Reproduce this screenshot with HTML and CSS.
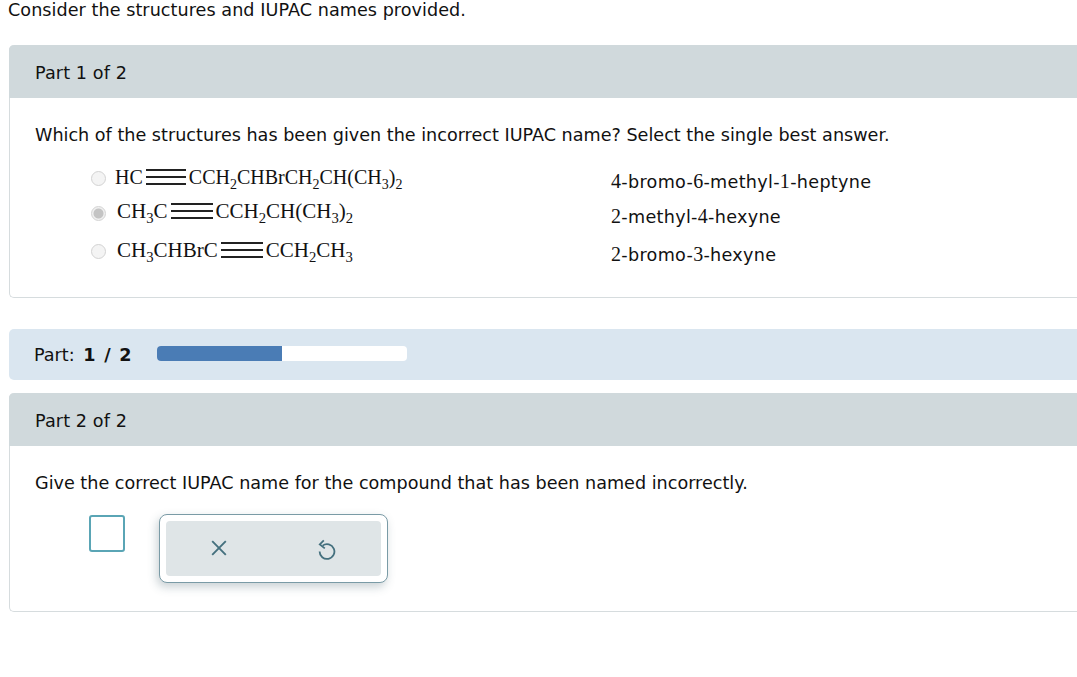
FILE: index.html
```html
<!DOCTYPE html>
<html lang="en">
<head>
<meta charset="utf-8">
<title>IUPAC names</title>
<link rel="stylesheet" href="styles.css">
</head>
<body>
<p class="intro">Consider the structures and IUPAC names provided.</p>

<section class="card first">
  <h2 class="card-head">Part 1 of 2</h2>
  <div class="card-body body-one">
    <p class="question">Which of the structures has been given the incorrect IUPAC name? Select the single best answer.</p>
    <div class="options">
      <div class="option row-a">
        <span class="radio"></span>
        <span class="formula f-a">HC<span class="bond b-a"></span>CCH<sub>2</sub>CHBrCH<sub>2</sub>CH(CH<sub>3</sub>)<sub>2</sub></span>
      </div>
      <div class="name row-a"><span class="num">4</span>-bromo-<span class="num">6</span>-methyl-<span class="num">1</span>-heptyne</div>
      <div class="option row-b">
        <span class="radio checked"></span>
        <span class="formula">CH<sub>3</sub>C<span class="bond"></span>CCH<sub>2</sub>CH(CH<sub>3</sub>)<sub>2</sub></span>
      </div>
      <div class="name row-b"><span class="num">2</span>-methyl-<span class="num">4</span>-hexyne</div>
      <div class="option row-c">
        <span class="radio"></span>
        <span class="formula">CH<sub>3</sub>CHBrC<span class="bond"></span>CCH<sub>2</sub>CH<sub>3</sub></span>
      </div>
      <div class="name row-c"><span class="num">2</span>-bromo-<span class="num">3</span>-hexyne</div>
    </div>
  </div>
</section>

<div class="progress">
  <span class="progress-label">Part: <b>1 / 2</b></span>
  <span class="track"><span class="fill"></span></span>
</div>

<section class="card">
  <h2 class="card-head">Part 2 of 2</h2>
  <div class="card-body body-two">
    <p class="question">Give the correct IUPAC name for the compound that has been named incorrectly.</p>
    <div class="answer">
      <span class="answer-box"></span>
      <div class="toolbar">
        <div class="toolbar-inner">
          <button class="tool tool-x" type="button" aria-label="Clear">
            <svg width="20" height="20" viewBox="0 0 20 20" fill="none" stroke="#44707e" stroke-width="1.9"><path d="M3.2 3.2 L16.8 16.8 M16.8 3.2 L3.2 16.8"/></svg>
          </button>
          <button class="tool tool-undo" type="button" aria-label="Reset">
            <svg width="20" height="24" viewBox="0 0 20 24" fill="none" stroke="#44707e" stroke-width="1.8"><path d="M6.6 7.6 A7.4 7.4 0 1 1 3.6 13.4"/><path d="M7.8 2.4 L3.8 6.4 L8.8 10.4"/></svg>
          </button>
        </div>
      </div>
    </div>
  </div>
</section>
</body>
</html>
```

FILE: styles.css
```css
html, body {
  margin: 0;
  padding: 0;
  background: #fff;
  overflow: hidden;
  height: 677px;
}
body {
  font-family: "DejaVu Sans", Verdana, sans-serif;
  font-size: 17.6px;
  line-height: 20px;
  color: #111;
}
.intro {
  margin: 0 0 25px 8px;
  height: 20px;
  line-height: 20px;
  letter-spacing: 0.05px;
}
.card {
  width: 1100px;
  margin-left: 9px;
  border: 1px solid #d6dcde;
  border-top: 0;
  border-right: 0;
  border-radius: 5px 0 0 5px;
  box-sizing: border-box;
}
.card-head {
  margin: 0 0 0 -1px;
  height: 53px;
  padding: 18px 0 0 26px;
  box-sizing: border-box;
  background: #d0d9dc;
  font-size: 17.6px;
  font-weight: 400;
  line-height: 20px;
  letter-spacing: 0.1px;
  border-radius: 5px 0 0 0;
}
.body-one { height: 199px; padding: 27px 0 0 25px; box-sizing: border-box; }
.body-two { height: 165px; padding: 27px 0 0 25px; box-sizing: border-box; }
.question { margin: 0; }
.options {
  display: grid;
  grid-template-columns: 576px 1fr;
  grid-template-rows: 34px 39px 36px;
  margin-top: 14px;
}
.option {
  display: flex;
  align-items: center;
  padding-left: 56px;
  height: 35px;
}
.radio {
  width: 15px;
  height: 15px;
  border-radius: 50%;
  border: 1px solid #d3d3d3;
  background: #f4f4f4;
  box-sizing: border-box;
  flex: none;
  position: relative;
  top: 2px;
}
.radio.checked {
  top: 3px;
  background: radial-gradient(circle, #c4c4c4 0 4.5px, #f0f0f0 5.5px);
}
.formula {
  font-family: "Liberation Serif", "Times New Roman", serif;
  font-size: 21px;
  line-height: 24px;
  color: #111;
  margin-left: 11px;
  white-space: nowrap;
}
.f-a { margin-left: 9px; font-size: 20px; }
.formula sub { font-size: 0.7em; line-height: 0; }
.bond {
  display: inline-block;
  width: 42px;
  height: 16px;
  margin: 0 3px;
  vertical-align: -1px;
  border-top: 2px solid #222;
  border-bottom: 2px solid #222;
  box-sizing: border-box;
  position: relative;
}
.bond::after {
  content: "";
  position: absolute;
  left: 0;
  right: 0;
  top: 5px;
  height: 2px;
  background: #222;
}
.b-a { width: 40px; }
.name {
  padding-top: 12px;
  box-sizing: border-box;
  line-height: 20px;
  letter-spacing: 0.3px;
}
.name.row-b { padding-top: 13px; }
.name.row-c { padding-top: 12px; }
.name .num {
  font-family: "Liberation Serif", "Times New Roman", serif;
  font-size: 20px;
}
.progress {
  display: flex;
  align-items: center;
  margin: 31px 0 13px 9px;
  width: 1100px;
  height: 51px;
  background: #dae6f0;
  border-radius: 5px 0 0 5px;
  padding-left: 25px;
  box-sizing: border-box;
}
.progress-label { width: 123px; }
.progress-label b { font-weight: 700; margin-left: 3px; word-spacing: 2.5px; }
.track {
  display: block;
  width: 250px;
  height: 15px;
  margin-bottom: 2px;
  background: #fff;
  border-radius: 4px;
  overflow: hidden;
}
.fill {
  display: block;
  width: 125px;
  height: 15px;
  background: #4a7cb5;
}
.answer {
  display: flex;
  align-items: flex-start;
  margin-top: 21px;
  padding-left: 54px;
}
.answer-box {
  display: block;
  width: 36px;
  height: 37px;
  margin-top: 1px;
  border: 2px solid #5aa5b5;
  border-radius: 3px;
  box-sizing: border-box;
}
.toolbar {
  margin-left: 34px;
  width: 229px;
  height: 69px;
  padding: 6px;
  box-sizing: border-box;
  border: 1px solid #7a9ba6;
  border-radius: 8px;
  background: #fff;
  box-shadow: -2px 4px 10px rgba(60, 90, 100, 0.28);
}
.toolbar-inner {
  display: flex;
  height: 55px;
  background: #dfe5e7;
  border-radius: 4px;
}
.tool {
  flex: 1;
  border: 0;
  padding: 0;
  background: transparent;
  display: flex;
  align-items: center;
  justify-content: center;
}
.tool-x svg { margin: 0 2px 2px 0; }
.tool-undo svg { margin: 2px 2px 0 0; }
```
